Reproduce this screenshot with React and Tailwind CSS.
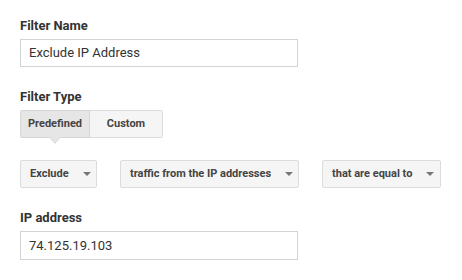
import React from "react";

function Arrow() {
  return (
    <svg width="8" height="4" viewBox="0 0 8 4" className="shrink-0">
      <path d="M0 0 L8 0 L4 4 Z" fill="#777777" />
    </svg>
  );
}

function Dropdown({ label, width }) {
  return (
    <div
      className={`flex items-center h-[28px] pl-[9px] pr-[7px] gap-[14px] border border-[#dcdcdc] rounded-[2px] bg-[#f5f5f5] text-[11px] font-bold text-[#444] ${width}`}
    >
      <span className="flex-1 whitespace-nowrap">{label}</span>
      <Arrow />
    </div>
  );
}

export default function App() {
  return (
    <div
      className="w-[462px] h-[280px] bg-white pl-[20px] pt-[18px]"
      style={{ fontFamily: "Roboto, 'Liberation Sans', sans-serif" }}
    >
      <div className="text-[13px] font-bold text-[#333] leading-[16px]">Filter Name</div>
      <div className="mt-[5px] w-[278px] h-[28px] border border-[#d3d3d3] flex items-center pl-[8px] text-[13px] text-[#333]">
        Exclude IP Address
      </div>

      <div className="mt-[22px] text-[13px] font-bold text-[#333] leading-[16px]">Filter Type</div>
      <div className="mt-[5px] flex">
        <div className="relative w-[70px] h-[28px] flex items-center justify-center bg-[#e6e6e6] border border-[#d6d6d6] rounded-l-[2px] text-[11px] font-bold text-[#444]">
          Predefined
          <div className="absolute left-1/2 -translate-x-1/2 top-full w-0 h-0 border-l-[6px] border-r-[6px] border-t-[7px] border-l-transparent border-r-transparent border-t-[#d6d6d6]" />
          <div className="absolute left-1/2 -translate-x-1/2 top-full w-0 h-0 border-l-[5px] border-r-[5px] border-t-[6px] border-l-transparent border-r-transparent border-t-[#e6e6e6]" />
        </div>
        <div className="w-[73px] h-[28px] flex items-center justify-center bg-[#f5f5f5] border border-l-0 border-[#dcdcdc] rounded-r-[2px] text-[11px] font-bold text-[#444]">
          Custom
        </div>
      </div>

      <div className="mt-[22px] flex gap-[23px]">
        <Dropdown label="Exclude" width="w-[77px]" />
        <Dropdown label="traffic from the IP addresses" width="w-[179px]" />
        <Dropdown label="that are equal to" width="w-[119px]" />
      </div>

      <div className="mt-[22px] text-[13px] font-bold text-[#333] leading-[16px]">IP address</div>
      <div className="mt-[5px] w-[278px] h-[29px] border border-[#d3d3d3] flex items-center pl-[8px] text-[13px] text-[#333]">
        74.125.19.103
      </div>
    </div>
  );
}
